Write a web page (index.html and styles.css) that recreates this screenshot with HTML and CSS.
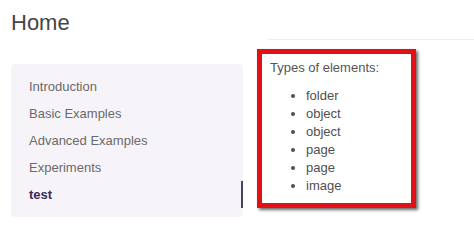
FILE: index.html
```html
<!DOCTYPE html>
<html>
<head>
<meta charset="utf-8">
<link rel="stylesheet" href="styles.css">
</head>
<body>
<div class="page">
  <h1 class="title">Home</h1>
  <div class="main">
    <nav class="sidebar">
      <a class="nav-item">Introduction</a>
      <a class="nav-item">Basic Examples</a>
      <a class="nav-item">Advanced Examples</a>
      <a class="nav-item">Experiments</a>
      <a class="nav-item active">test</a>
    </nav>
    <div class="content">
      <div class="rule"></div>
      <div class="box">
        <p class="box-title">Types of elements:</p>
        <ul class="types">
          <li>folder</li>
          <li>object</li>
          <li>object</li>
          <li>page</li>
          <li>page</li>
          <li>image</li>
        </ul>
      </div>
    </div>
  </div>
</div>
</body>
</html>
```
FILE: styles.css
```css
html, body {
  margin: 0;
  padding: 0;
  background: #ffffff;
}
body {
  font-family: "Liberation Sans", Arial, sans-serif;
  font-size: 13px;
  color: #555;
}
.page {
  padding-left: 11px;
}
.title {
  margin: 10px 0 0 0;
  font-size: 22px;
  line-height: 26px;
  font-weight: normal;
  color: #454545;
}
.main {
  display: flex;
  margin-top: 3px;
}
.sidebar {
  margin-top: 25px;
  width: 232px;
  box-sizing: border-box;
  background: #f6f4f9;
  border-radius: 4px;
  padding: 9px 0;
  display: flex;
  flex-direction: column;
}
.nav-item {
  display: block;
  height: 27px;
  line-height: 27px;
  padding-left: 18px;
  color: #6a6a6a;
  font-size: 13px;
}
.nav-item.active {
  font-weight: bold;
  color: #3c2b57;
  border-right: 2px solid #4b4068;
}
.content {
  flex: 1;
  margin-left: 14px;
}
.rule {
  height: 1px;
  background: #eeeeee;
  margin-left: 11px;
}
.box {
  margin-top: 9px;
  width: 159px;
  box-sizing: border-box;
  border: 5px solid #e31015;
  padding: 5px 8px 1px 8px;
  box-shadow: 2px 2px 3px rgba(0, 0, 0, 0.6);
  background: #fff;
}
.box-title {
  margin: 0;
  line-height: 18px;
  color: #555;
}
.types {
  margin: 10px 0 7px 0;
  padding-left: 36px;
  line-height: 18px;
  color: #505050;
}
```
